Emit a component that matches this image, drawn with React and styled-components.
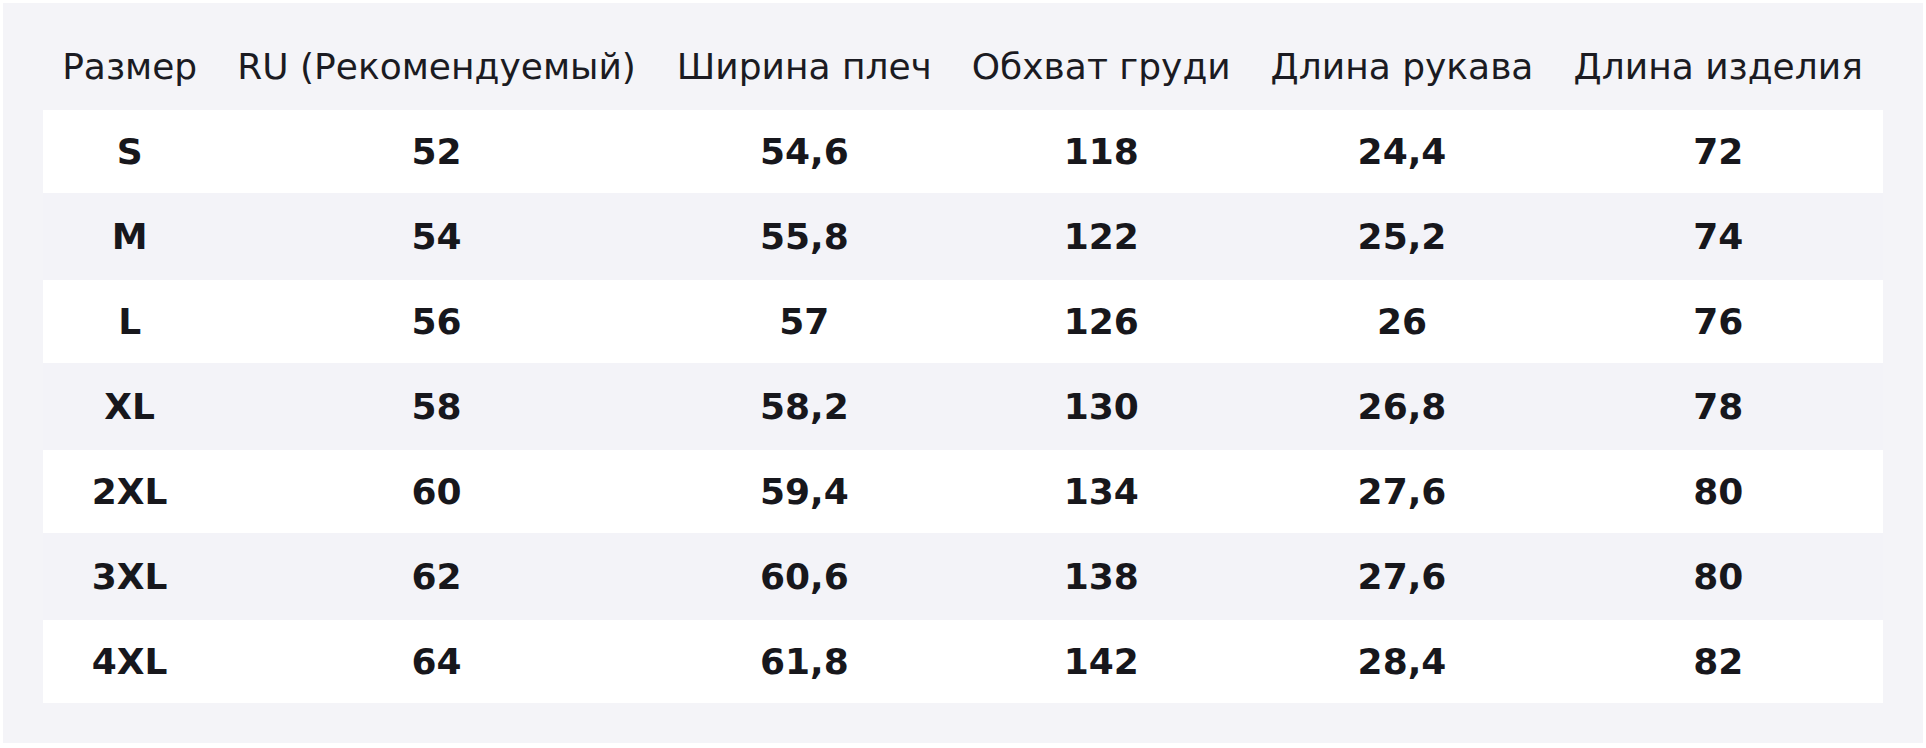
import React from "react";
import styled, { createGlobalStyle } from "styled-components";

const GlobalStyle = createGlobalStyle`
  body {
    margin: 0;
    background: #ffffff;
    font-family: "DejaVu Sans", Verdana, sans-serif;
  }
`;

const Page = styled.div`
  padding: 3px;
`;

const Panel = styled.div`
  background: #f4f4f8;
  padding: 40px;
`;

const Table = styled.table`
  width: 100%;
  border-collapse: collapse;
  color: #17171c;
`;

const HeadCell = styled.th`
  font-size: 36px;
  font-weight: normal;
  line-height: 42px;
  white-space: nowrap;
  padding: 3px 18px 22px;
  text-align: center;
  color: #1b1b22;
`;

const Row = styled.tr`
  background: ${(p) => (p.$odd ? "#f3f3f8" : "#ffffff")};
  height: ${(p) => (p.$odd ? "87px" : "83px")};
`;

const Cell = styled.td`
  font-size: 36px;
  font-weight: bold;
  line-height: 42px;
  text-align: center;
  vertical-align: middle;
  padding: 0 18px;
  white-space: nowrap;
`;

const headers = [
  "Размер",
  "RU (Рекомендуемый)",
  "Ширина плеч",
  "Обхват груди",
  "Длина рукава",
  "Длина изделия",
];

const rows = [
  ["S", "52", "54,6", "118", "24,4", "72"],
  ["M", "54", "55,8", "122", "25,2", "74"],
  ["L", "56", "57", "126", "26", "76"],
  ["XL", "58", "58,2", "130", "26,8", "78"],
  ["2XL", "60", "59,4", "134", "27,6", "80"],
  ["3XL", "62", "60,6", "138", "27,6", "80"],
  ["4XL", "64", "61,8", "142", "28,4", "82"],
];

export default function App() {
  return (
    <Page>
      <GlobalStyle />
      <Panel>
        <Table>
          <thead>
            <tr>
              {headers.map((h) => (
                <HeadCell key={h}>{h}</HeadCell>
              ))}
            </tr>
          </thead>
          <tbody>
            {rows.map((r, i) => (
              <Row key={r[0]} $odd={i % 2 === 1}>
                {r.map((v, j) => (
                  <Cell key={j}>{v}</Cell>
                ))}
              </Row>
            ))}
          </tbody>
        </Table>
      </Panel>
    </Page>
  );
}
